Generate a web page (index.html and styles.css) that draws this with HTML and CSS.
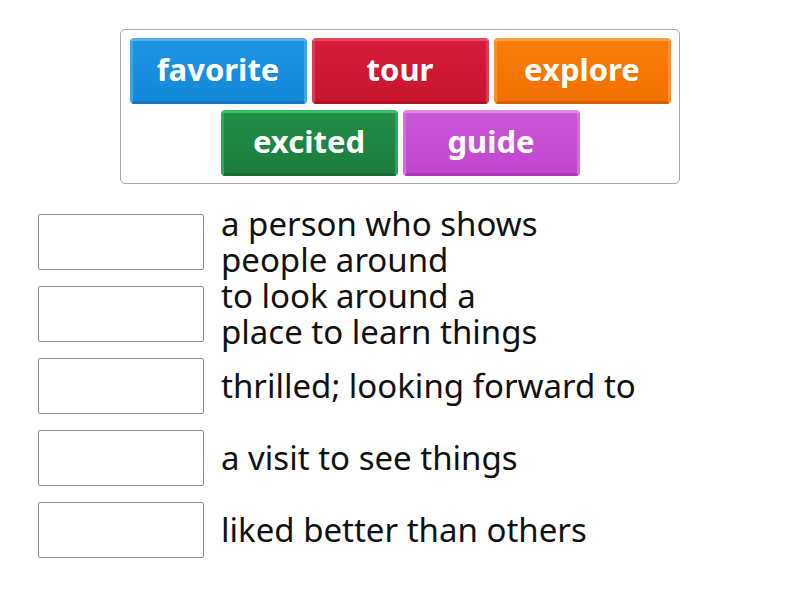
FILE: index.html
```html
<!DOCTYPE html>
<html>
<head>
<meta charset="utf-8">
<link rel="stylesheet" href="styles.css">
</head>
<body>
<div class="bank">
  <div class="tile blue">favorite</div>
  <div class="tile red">tour</div>
  <div class="tile orange">explore</div>
  <div class="tile green">excited</div>
  <div class="tile purple">guide</div>
</div>
<div class="rows">
  <div class="row"><div class="slot"></div><div class="def">a person who shows people around</div></div>
  <div class="row"><div class="slot"></div><div class="def">to look around a place to learn things</div></div>
  <div class="row"><div class="slot"></div><div class="def single">thrilled; looking forward to</div></div>
  <div class="row"><div class="slot"></div><div class="def single">a visit to see things</div></div>
  <div class="row"><div class="slot"></div><div class="def single">liked better than others</div></div>
</div>
</body>
</html>
```
FILE: styles.css
```css
html, body {
  margin: 0;
  padding: 0;
  background: #fff;
  font-family: "Noto Sans", "Open Sans", sans-serif;
}
.bank {
  box-sizing: border-box;
  width: 560px;
  margin: 29px 0 0 120px;
  padding: 8px 8px 7px 8px;
  border: 1px solid #a8a8a8;
  border-radius: 5px;
  display: flex;
  flex-wrap: wrap;
  justify-content: center;
  column-gap: 5px;
  row-gap: 6px;
}
.tile {
  box-sizing: border-box;
  width: 177px;
  height: 66px;
  border-radius: 4px;
  border: 3px solid;
  color: #fff;
  font-weight: 700;
  font-size: 31px;
  display: flex;
  align-items: center;
  justify-content: center;
  padding-bottom: 5px;
}
.blue { background: linear-gradient(#1d95e2, #1488d8); border-color: #4cafea #3ea4e6 #1277c2 #3ea4e6; }
.red { background: linear-gradient(#d81c3c, #c8152f); border-color: #e4485f #dc3a52 #ad1228 #dc3a52; }
.orange { background: linear-gradient(#f97e0c, #f07000); border-color: #fc9c45 #fa8d2e #d86200 #fa8d2e; }
.green { background: linear-gradient(#218c47, #1c7d3e); border-color: #34c264 #2aa955 #176e36 #2aa955; }
.purple { background: linear-gradient(#c957d6, #c146cf); border-color: #da88e3 #d170dc #ad36bb #d170dc; }
.rows {
  margin: 22px 0 0 38px;
  display: flex;
  flex-direction: column;
}
.row {
  height: 72px;
  display: flex;
  align-items: center;
}
.slot {
  box-sizing: border-box;
  width: 166px;
  height: 56px;
  border: 1px solid #8c8c8c;
  border-radius: 2px;
  flex: none;
}
.def {
  margin-left: 17px;
  width: 330px;
  font-size: 33px;
  line-height: 36px;
  color: #111;
}
.single {
  white-space: nowrap;
}
```
